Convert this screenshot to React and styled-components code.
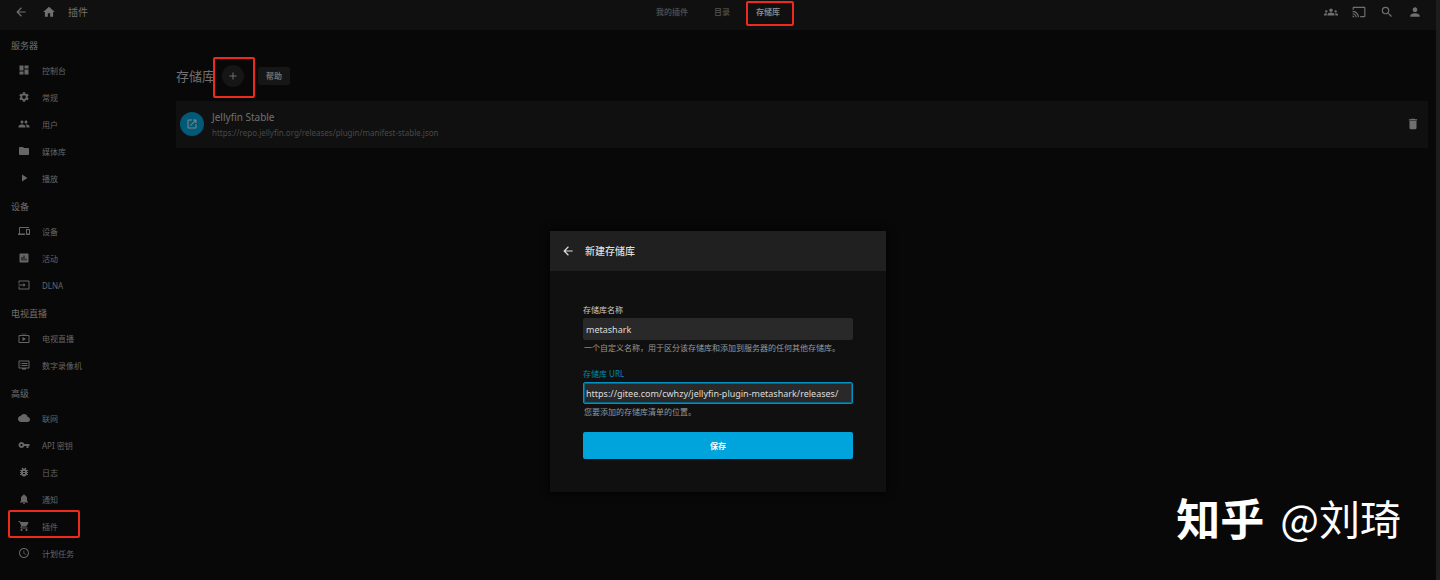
import React from "react";
import styled, { createGlobalStyle, css } from "styled-components";
import {
  MdArrowBack, MdHome, MdDashboard, MdSettings, MdPeople, MdFolder, MdPlayArrow,
  MdDevices, MdAssessment, MdInput, MdLiveTv, MdDvr, MdCloud, MdVpnKey, MdBugReport,
  MdNotifications, MdShoppingCart, MdAccessTime, MdGroups, MdCast, MdSearch, MdPerson,
  MdDelete, MdAdd, MdOpenInNew,
} from "react-icons/md";

const GlobalStyle = createGlobalStyle`
  *, *::before, *::after { box-sizing: border-box; }
  body {
    margin: 0;
    background: #080808;
    color: #707070;
    font-family: "Noto Sans", "Noto Sans CJK SC", sans-serif;
    font-size: 8px;
    line-height: 12px;
  }
  button, input { font: inherit; color: inherit; }
  button { border: 0; padding: 0; background: none; cursor: pointer; }
  h1, h2, h3, p, ul { margin: 0; padding: 0; font-weight: 400; }
  ul { list-style: none; }
`;

const marked = css`
  position: relative;
  &::after {
    content: "";
    position: absolute;
    inset: ${(p) => p.$markInset || "0"};
    border: 2px solid #ee2a1e;
    border-radius: 2px;
    pointer-events: none;
  }
`;

const Page = styled.div`
  position: relative;
  min-height: 100vh;
  border-right: 4px solid #1d1d1d;
`;

const Header = styled.header`
  display: grid;
  grid-template-columns: 1fr auto 1fr;
  align-items: start;
  height: 30px;
  padding: 0 7px;
  background: #101010;
`;

const HeaderGroup = styled.div`
  display: flex;
  align-items: center;
  height: 24px;
  justify-content: ${(p) => (p.$end ? "flex-end" : "flex-start")};
`;

const IconButton = styled.button`
  display: grid;
  place-items: center;
  width: 28px;
  height: 24px;
  font-size: 14px;
`;

const PageTitle = styled.h1`
  padding-left: 5px;
  font-size: 10px;
`;

const Tabs = styled.nav`
  display: flex;
`;

const Tab = styled.button`
  height: 24px;
  padding: 0 13px;
  color: ${(p) => (p.$active ? "#858585" : "#484848")};
  font-weight: 700;
  ${(p) => p.$active && marked}
`;

const Body = styled.div`
  display: grid;
  grid-template-columns: 176px minmax(0, 1fr);
`;

const Sidebar = styled.nav`
  min-width: 0;
`;

const SectionTitle = styled.h3`
  height: 26px;
  padding: 4px 0 0 11px;
  font-size: 9px;
  line-height: 24px;
`;

const NavLink = styled.a`
  display: flex;
  align-items: center;
  gap: 12px;
  height: 27px;
  padding-left: 18px;
  color: #666;
  text-decoration: none;
  svg { font-size: 12px; }
  span { padding-top: 3px; }
  ${(p) => p.$active && marked}
`;

const Main = styled.main`
  padding: 35px 8px 0 0;
`;

const TitleRow = styled.div`
  display: flex;
  align-items: center;
  height: 22px;
`;

const Heading = styled.h2`
  font-size: 13px;
  line-height: 22px;
`;

const AddButton = styled.button`
  display: grid;
  place-items: center;
  width: 22px;
  height: 22px;
  margin: 0 14px 0 7px;
  border-radius: 50%;
  background: #161616;
  font-size: 12px;
  ${marked}
`;

const HelpButton = styled.button`
  height: 18px;
  padding: 0 8px;
  border-radius: 2px;
  background: #161616;
  font-weight: 700;
`;

const RepoCard = styled.article`
  display: flex;
  align-items: center;
  height: 47px;
  margin-top: 14px;
  padding: 0 1px 1px 4px;
  background: #101010;
`;

const RepoIcon = styled.a`
  display: grid;
  place-items: center;
  flex: none;
  width: 24px;
  height: 24px;
  margin-right: 8px;
  border-radius: 50%;
  background: #005a78;
  color: #858585;
  font-size: 12px;
`;

const RepoText = styled.div`
  flex: 1;
  min-width: 0;
  padding-top: 1px;
  line-height: 16px;
`;

const RepoName = styled.h3`
  font-size: 10px;
`;

const RepoUrl = styled.p`
  color: #484848;
  font-size: 8px;
`;

const DialogLayer = styled.div`
  position: absolute;
  inset: 0;
  display: flex;
  justify-content: center;
  align-items: flex-start;
  padding-top: 231px;
`;

const Dialog = styled.section`
  width: 336px;
  background: #101010;
  color: #ddd;
  box-shadow: 0 0 8px #000;
`;

const DialogHeader = styled.header`
  display: flex;
  align-items: center;
  height: 40px;
  padding-left: 4px;
  background: #202020;
`;

const DialogTitle = styled.h2`
  padding-left: 3px;
  font-size: 10px;
  font-weight: 500;
`;

const Form = styled.form`
  display: grid;
  gap: 14px;
  padding: 33px;
`;

const Field = styled.div`
  display: grid;
  gap: 2px;
`;

const Label = styled.label`
  color: ${(p) => (p.$focused ? "#0089b8" : "#ccc")};
`;

const Input = styled.input`
  width: 100%;
  height: 22px;
  padding: 0 2px;
  border: ${(p) => (p.$focused ? "1px solid #0092c4" : "1px solid #292929")};
  border-radius: 2px;
  outline: none;
  background: #292929;
  font-size: 9px;
  box-shadow: ${(p) => (p.$focused ? "inset 0 0 0 1px #00668a" : "none")};
`;

const Hint = styled.p`
  padding-left: 1px;
  color: #999;
  white-space: nowrap;
`;

const SaveButton = styled.button`
  height: 27px;
  border-radius: 2px;
  background: #00a4dc;
  color: #fff;
  font-weight: 700;
`;

const Watermark = styled.div`
  position: absolute;
  right: 35px;
  bottom: 33px;
  display: flex;
  align-items: center;
  gap: 16px;
  color: #fff;
  font-family: "Noto Sans CJK SC", sans-serif;
  font-size: 41px;
  line-height: 60px;
  strong { font-size: 44px; font-weight: 700; }
`;

const sections = [
  { title: "服务器", items: [
    [MdDashboard, "控制台"], [MdSettings, "常规"], [MdPeople, "用户"],
    [MdFolder, "媒体库"], [MdPlayArrow, "播放"],
  ] },
  { title: "设备", items: [
    [MdDevices, "设备"], [MdAssessment, "活动"], [MdInput, "DLNA"],
  ] },
  { title: "电视直播", items: [[MdLiveTv, "电视直播"], [MdDvr, "数字录像机"]] },
  { title: "高级", items: [
    [MdCloud, "联网"], [MdVpnKey, "API 密钥"], [MdBugReport, "日志"],
    [MdNotifications, "通知"], [MdShoppingCart, "插件", true], [MdAccessTime, "计划任务"],
  ] },
];

export default function App() {
  return (
    <>
      <GlobalStyle />
      <Page lang="zh-CN">
        <Header>
          <HeaderGroup>
            <IconButton aria-label="返回"><MdArrowBack /></IconButton>
            <IconButton aria-label="主页"><MdHome /></IconButton>
            <PageTitle>插件</PageTitle>
          </HeaderGroup>
          <Tabs>
            <Tab>我的插件</Tab>
            <Tab>目录</Tab>
            <Tab $active $markInset="1px -1px -2px 3px">存储库</Tab>
          </Tabs>
          <HeaderGroup $end>
            <IconButton aria-label="同步播放"><MdGroups /></IconButton>
            <IconButton aria-label="投放"><MdCast /></IconButton>
            <IconButton aria-label="搜索"><MdSearch /></IconButton>
            <IconButton aria-label="用户"><MdPerson /></IconButton>
          </HeaderGroup>
        </Header>
        <Body>
          <Sidebar>
            {sections.map((section) => (
              <section key={section.title}>
                <SectionTitle>{section.title}</SectionTitle>
                <ul>
                  {section.items.map(([Icon, label, active]) => (
                    <li key={label}>
                      <NavLink href="#" $active={active} $markInset="-2px 96px 1px 8px">
                        <Icon />
                        <span>{label}</span>
                      </NavLink>
                    </li>
                  ))}
                </ul>
              </section>
            ))}
          </Sidebar>
          <Main>
            <TitleRow>
              <Heading>存储库</Heading>
              <AddButton aria-label="添加" $markInset="-8px -11px -11px -9px"><MdAdd /></AddButton>
              <HelpButton>帮助</HelpButton>
            </TitleRow>
            <RepoCard>
              <RepoIcon href="#" aria-label="打开"><MdOpenInNew /></RepoIcon>
              <RepoText>
                <RepoName>Jellyfin Stable</RepoName>
                <RepoUrl>https://repo.jellyfin.org/releases/plugin/manifest-stable.json</RepoUrl>
              </RepoText>
              <IconButton aria-label="删除"><MdDelete /></IconButton>
            </RepoCard>
          </Main>
        </Body>
        <DialogLayer>
          <Dialog role="dialog" aria-labelledby="dialog-title">
            <DialogHeader>
              <IconButton aria-label="返回"><MdArrowBack /></IconButton>
              <DialogTitle id="dialog-title">新建存储库</DialogTitle>
            </DialogHeader>
            <Form onSubmit={(e) => e.preventDefault()}>
              <Field>
                <Label htmlFor="repo-name">存储库名称</Label>
                <Input id="repo-name" type="text" defaultValue="metashark" />
                <Hint>一个自定义名称，用于区分该存储库和添加到服务器的任何其他存储库。</Hint>
              </Field>
              <Field>
                <Label htmlFor="repo-url" $focused>存储库 URL</Label>
                <Input id="repo-url" type="text" $focused defaultValue="https://gitee.com/cwhzy/jellyfin-plugin-metashark/releases/" />
                <Hint>您要添加的存储库清单的位置。</Hint>
              </Field>
              <SaveButton type="submit">保存</SaveButton>
            </Form>
          </Dialog>
        </DialogLayer>
        <Watermark><strong>知乎</strong><span>@刘琦</span></Watermark>
      </Page>
    </>
  );
}
